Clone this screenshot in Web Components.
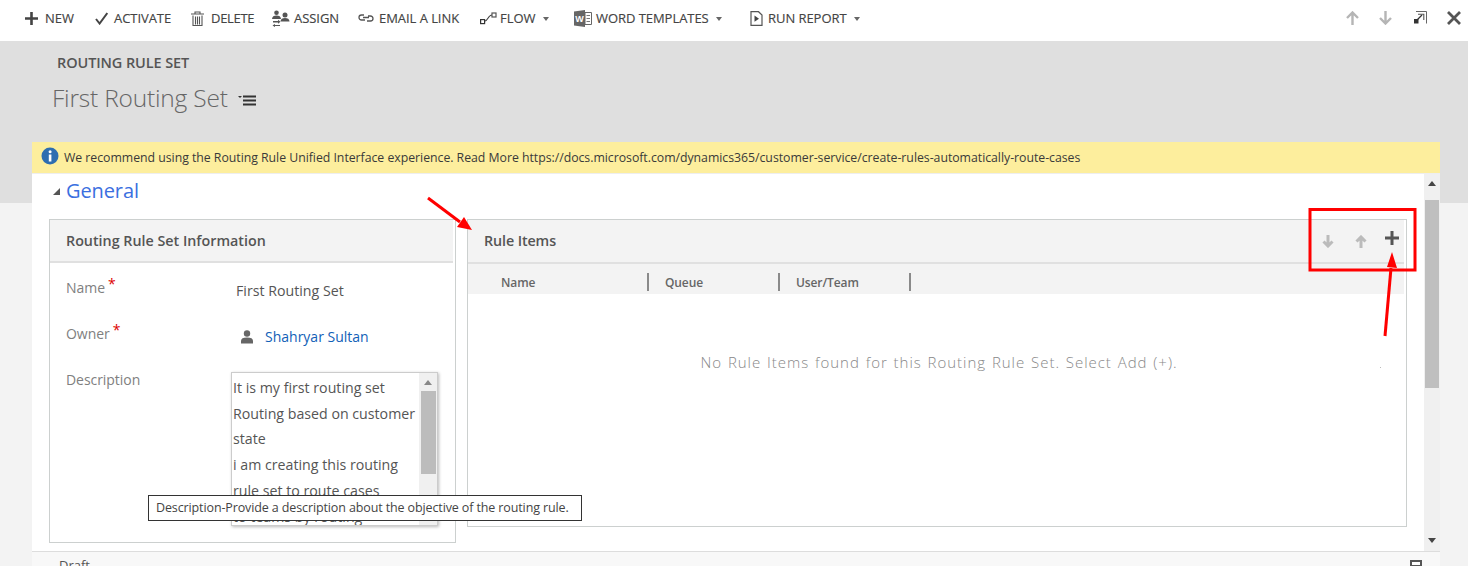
<!DOCTYPE html>
<html><head><meta charset="utf-8">
<style>
html,body{margin:0;padding:0;height:566px;overflow:hidden;background:#f3f3f3;font-family:"Open Sans","Noto Sans",sans-serif}
</style></head><body>
<crm-page>
  <crm-toolbar slot="toolbar">
    <tb-item w="29" gap="7" mr="21" label="NEW"><svg slot="icon" width="13" height="13" viewBox="0 0 13 13"><path d="M5.200 0h2.600v5.200H13v2.600H7.800V13H5.200V7.800H0V5.200h5.200z" fill="#444"/></svg></tb-item>
    <tb-item w="57" gap="6" mr="20" label="ACTIVATE"><svg slot="icon" width="13" height="13" viewBox="0 0 13 13"><path d="M1 7l3.600 4.500L12.300 1" fill="none" stroke="#444" stroke-width="2"/></svg></tb-item>
    <tb-item w="42" gap="7" mr="19" ls="-.3" label="DELETE"><svg slot="icon" width="13" height="15" viewBox="0 0 13 15"><path d="M0 3h13M4 3V1h5v2M2 4.500V14.500h9V4.500M4.500 5.500v8M6.500 5.500v8M8.500 5.500v8" fill="none" stroke="#555" stroke-width="1.100"/></svg></tb-item>
    <tb-item w="45" gap="4" mr="19" label="ASSIGN"><svg slot="icon" width="18" height="17" viewBox="0 0 18 17"><g fill="#555"><circle cx="4.500" cy="2.700" r="2.300"/><path d="M0 9c0-2.500 2-3.500 4.500-3.500S9 6.500 9 9z"/><circle cx="13" cy="5" r="2.500"/><path d="M8.500 11.500c0-2.500 2-3.500 4.500-3.500s4.500 1 4.500 3.500z"/><path d="M1 11h5V9.800l2.500 2-2.500 2V12.500H1zM8 15H3v-1.100L.5 15.500 3 17v-1h5z" /></g></svg></tb-item>
    <tb-item w="81" gap="5" mr="20" label="EMAIL A LINK"><svg slot="icon" width="16" height="8" viewBox="0 0 16 8"><path d="M6 1H3.500a2.500 2.500 0 0 0 0 5H7M10 2h2.500a2.500 2.500 0 0 1 0 5H9M5 3.500h6" fill="none" stroke="#555" stroke-width="1.300"/></svg></tb-item>
    <tb-item w="35" gap="3" mr="8" label="FLOW"><svg slot="icon" width="17" height="13" viewBox="0 0 17 13"><path d="M5 9C8 9 8 3 12 3" fill="none" stroke="#444" stroke-width="1.100"/><rect x=".6" y="7.600" width="4" height="4" fill="none" stroke="#333" stroke-width="1.200"/><rect x="12" y="1" width="4" height="4" fill="none" stroke="#555" stroke-width="1.200"/></svg></tb-item>
    <tb-caret style="--mr:25px"></tb-caret>
    <tb-item w="111" gap="4" mr="9" label="WORD TEMPLATES"><svg slot="icon" width="18" height="17" viewBox="0 0 18 17"><path d="M0 1.500L11 0v17L0 15.500z" fill="#666"/><path d="M11 2.500h6.500v12H11z" fill="#fff" stroke="#666"/><path d="M12.500 5.500h3.500M12.500 8.500h3.500M12.500 11.500h3.500" stroke="#777"/><text x="5.500" y="11.500" font-size="9" font-weight="700" fill="#fff" text-anchor="middle" font-family="Liberation Sans,sans-serif">W</text></svg></tb-item>
    <tb-caret style="--mr:28px"></tb-caret>
    <tb-item w="78" gap="5" mr="8" label="RUN REPORT"><svg slot="icon" width="13" height="15" viewBox="0 0 13 15"><path d="M1 .7h7.500L12 4v10.300H1z" fill="#fff" stroke="#555" stroke-width="1.200"/><path d="M4.500 4.500L9 7.700l-4.500 3z" fill="#444"/></svg></tb-item>
    <tb-caret></tb-caret>
    <tb-nav></tb-nav>
  </crm-toolbar>
  <crm-header slot="header" entity="ROUTING RULE SET" title-text="First Routing Set"></crm-header>
  <crm-form slot="form">
    <crm-notice slot="notice">We recommend using the Routing Rule Unified Interface experience. Read More https://docs.microsoft.com/dynamics365/customer-service/create-rules-automatically-route-cases</crm-notice>
    <crm-section slot="body" heading="General">
      <crm-info-panel slot="left">
        <crm-field label="Name" required top="15" h="46"><span>First Routing Set</span></crm-field>
        <crm-field label="Owner" required h="46"><crm-owner>Shahryar Sultan</crm-owner></crm-field>
        <crm-field label="Description" h="160"><crm-desc></crm-desc></crm-field>
      </crm-info-panel>
      <crm-rules-panel slot="right"></crm-rules-panel>
    </crm-section>
    <crm-scrollbar slot="scroll"></crm-scrollbar>
    <crm-footer slot="footer">Draft</crm-footer>
  </crm-form>
  <crm-tooltip slot="overlay">Description-Provide a description about the objective of the routing rule.</crm-tooltip>
  <crm-annotations slot="overlay"></crm-annotations>
</crm-page>
<script>
function def(name, css, html, extra){
  customElements.define(name, class extends HTMLElement{
    connectedCallback(){
      if(this.shadowRoot) return;
      const r=this.attachShadow({mode:'open'});
      const h=typeof html==='function'?html(this):html;
      r.innerHTML='<style>'+(typeof css==='function'?css(this):css)+'</style>'+h;
      if(extra) extra(this,r);
    }
  });
}
def('crm-page',`:host{display:block;position:relative;width:1468px;height:566px;overflow:hidden;background:linear-gradient(#dfdfdf 203px,#f3f3f3 203px)}`,
 `<slot name="toolbar"></slot><slot name="header"></slot><slot name="form"></slot><slot name="overlay"></slot>`);
def('crm-toolbar',`:host{display:flex;align-items:center;height:41px;background:#fff;color:#444;box-sizing:border-box;padding-left:25px}`,`<slot></slot>`);
def('tb-item',e=>`:host{display:flex;align-items:center;gap:${e.getAttribute('gap')}px;margin-right:${e.getAttribute('mr')}px;font:400 13px/16px "Open Sans",sans-serif;color:#444;flex:none;padding-bottom:5px}
 span{display:block;width:${e.getAttribute('w')}px;white-space:nowrap;letter-spacing:${e.getAttribute('ls')||'-.05'}px;-webkit-text-stroke:.15px #444}
 ::slotted(svg){display:block;flex:none}`,e=>`<slot name="icon"></slot><span>${e.getAttribute('label')}</span>`);
def('tb-caret',`:host{display:block;flex:none;width:0;height:0;border:3.500px solid transparent;border-top:4px solid #666;border-bottom:0;margin-right:var(--mr,0);margin-bottom:4px}`,'');
def('tb-nav',`:host{display:flex;align-items:center;margin-left:auto;padding-right:7px;gap:20.500px;height:100%;padding-bottom:6px;box-sizing:border-box}
 svg{display:block}`,
 `<svg width="13" height="14" viewBox="0 0 13 14"><path d="M6.500 14V2M1 7l5.500-5.500L12 7" fill="none" stroke="#b5b5b5" stroke-width="2.400"/></svg>
  <svg width="13" height="14" viewBox="0 0 13 14"><path d="M6.500 0v12M1 7l5.500 5.500L12 7" fill="none" stroke="#b5b5b5" stroke-width="2.400"/></svg>
  <svg width="14" height="13" viewBox="0 0 14 13"><path d="M3 .5h10.500v12" fill="none" stroke="#666"/><path d="M5 3.200h5.800v5.800" fill="none" stroke="#555" stroke-width="1.100"/><path d="M1 8h4.500v4.500H1z" fill="#333"/><path d="M4 9l5-5" stroke="#333" stroke-width="1.300"/></svg>
  <svg width="14" height="14" viewBox="0 0 14 14"><path d="M1 1l12 12M13 1L1 13" stroke="#555" stroke-width="2.800"/></svg>`);
def('crm-header',`:host{display:block;height:101px;box-sizing:border-box;padding:12px 0 0 52px;color:#555}
 .e{font:600 14.500px/20px "Open Sans",sans-serif;margin-left:5px;color:#555;letter-spacing:-.1px}
 .t{display:flex;align-items:center;margin-top:8px;font:300 24.500px/34px "Open Sans",sans-serif;color:#666;letter-spacing:-.2px}
 svg{margin-left:10px;margin-top:4px}`,
 e=>`<div class="e">${e.getAttribute('entity')}</div><div class="t">${e.getAttribute('title-text')}<svg width="19" height="11" viewBox="0 0 19 11"><path d="M0 1h4L2 3z" fill="#333"/><path d="M5 1.500h13M5 5.500h13M5 9.500h13" stroke="#333" stroke-width="2"/></svg></div>`);
def('crm-form',`:host{display:grid;grid-template-columns:1392px 16px;grid-template-rows:32px 377px 15px;width:1408px;margin-left:32px}
 ::slotted([slot=notice]){grid-column:1/3}
 ::slotted([slot=footer]){grid-column:1/3}`,
 `<slot name="notice"></slot><slot name="body"></slot><slot name="scroll"></slot><slot name="footer"></slot>`);
def('crm-notice',`:host{display:flex;align-items:center;background:#fdee9d;color:#3a3a3a;font:400 12.300px/16px "Open Sans",sans-serif;white-space:nowrap;box-sizing:border-box;padding-left:9px;gap:5px;letter-spacing:-.03px;border-bottom:1px solid #eee}
 svg{flex:none;margin-top:-4px}`,
 `<svg width="18" height="18" viewBox="0 0 18 18"><circle cx="9" cy="9" r="8.500" fill="#2e6db0"/><rect x="7.800" y="7.500" width="2.600" height="7" fill="#fff"/><circle cx="9.100" cy="4.800" r="1.500" fill="#fff"/></svg><slot></slot>`);
def('crm-section',`:host{display:block;background:#fff;height:377px;overflow:hidden}
 .h{display:flex;align-items:center;height:45px;box-sizing:border-box;padding:0 0 12px 21px;font:400 20px/30px "Open Sans",sans-serif;color:#3b6fe0;letter-spacing:-.1px}
 .h i{display:block;width:0;height:0;border-style:solid;border-width:0 0 7px 7px;border-color:transparent transparent #555 transparent;margin-right:6px;margin-top:1px}
 .r{display:flex;align-items:flex-start;padding-left:17px;gap:11px}`,
 e=>`<div class="h"><i></i>${e.getAttribute('heading')}</div><div class="r"><slot name="left"></slot><slot name="right"></slot></div>`);
def('crm-info-panel',`:host{display:block;flex:none;width:407px;height:324px;box-sizing:border-box;border:1px solid #ccd0cf;background:#fff}
 .h{height:43px;box-sizing:border-box;width:403px;background:#f3f3f3;border-bottom:2px solid #e0e0e0;font:600 14.300px/42px "Open Sans",sans-serif;color:#555;padding-left:16px}`,
 `<div class="h">Routing Rule Set Information</div><slot></slot>`);
def('crm-field',e=>`:host{display:grid;grid-template-columns:170px 1fr;padding-left:16px;height:${e.getAttribute('h')}px;margin-top:${e.getAttribute('top')||0}px;font:400 14.200px/20px "Open Sans",sans-serif;color:#555}
 .l{color:#808080;display:flex;align-items:flex-start;gap:3px;font-size:14px;letter-spacing:-.05px}
 .l b{color:#d00;font-weight:400;font-size:14px;line-height:16px;margin-top:-2px}
 .v{padding-top:3px;min-width:0}`,
 e=>`<div class="l">${e.getAttribute('label')}${e.hasAttribute('required')?'<b>*</b>':''}</div><div class="v"><slot></slot></div>`);
def('crm-owner',`:host{display:flex;align-items:center;gap:12px;margin-left:5px;color:#1160b7;font-size:14px}
 svg{display:block}`,`<svg width="12" height="14" viewBox="0 0 12 14"><circle cx="6" cy="3.500" r="3.200" fill="#666"/><path d="M0 13.500V11c0-2.500 2-3.500 6-3.500s6 1 6 3.500v2.500z" fill="#666"/></svg><slot></slot>`);
def('crm-desc',`:host{display:flex;width:207px;height:154px;box-sizing:border-box;margin-top:-1px;margin-left:-5px;border:1px solid #ccc;box-shadow:1px 1px 3px #bbb;background:#fff;overflow:hidden}
 .t{flex:1;padding:2px 0 0 1px;font:400 14.200px/25.700px "Open Sans",sans-serif;color:#555;white-space:nowrap;overflow:hidden}
 .s{flex:none;width:18px;background:#f0f0f0;display:flex;flex-direction:column;align-items:center;padding-top:7px;box-sizing:border-box}
 .s i{display:block;width:0;height:0;border:4px solid transparent;border-bottom:5px solid #888;border-top:0}
 .s b{display:block;width:15px;height:83px;background:#bcbcbc;margin-top:6px}`,
 `<div class="t">It is my first routing set<br>Routing based on customer<br>state<br>i am creating this routing<br>rule set to route cases<br>to teams by routing</div><div class="s"><i></i><b></b></div>`);
def('crm-rules-panel',`:host{display:block;flex:none;width:940px;height:308px;box-sizing:border-box;border:1px solid #ccd0cf;background:#fff;position:relative;font-family:"Open Sans",sans-serif}
 .h{width:936px;height:44px;box-sizing:border-box;background:#f3f3f3;border-bottom:2px solid #e0e0e0;display:flex;align-items:center;padding:0 5px 0 16px;font:600 14.300px/20px "Open Sans",sans-serif;color:#555;letter-spacing:-.1px}
 .h span{margin-right:auto}
 .h svg{display:block;flex:none}
 .c{width:936px;height:30px;box-sizing:border-box;background:#f3f3f3;display:flex;align-items:center;font:600 12px/16px "Open Sans",sans-serif;color:#666;padding:6px 0 0 33px}
 .c div{box-sizing:border-box;height:18px;border-right:2px solid #8a8a8a;line-height:20px;letter-spacing:-.1px}
 .e{display:flex;justify-content:center;padding:57px 0 0 4px;font:300 15px/22px "Open Sans",sans-serif;color:#888;letter-spacing:.97px;white-space:nowrap;word-spacing:1px}`,
 `<div class="h"><span>Rule Items</span>
   <svg width="12" height="13" viewBox="0 0 12 13" style="margin-right:21px"><path d="M6 0v11M1.500 6.500L6 11l4.500-4.500" fill="none" stroke="#bbb" stroke-width="3"/></svg>
   <svg width="12" height="13" viewBox="0 0 12 13" style="margin-right:18px"><path d="M6 13V2M1.500 6.500L6 2l4.500 4.500" fill="none" stroke="#bbb" stroke-width="3"/></svg>
   <svg width="14" height="14" viewBox="0 0 14 14" style="margin-top:-6px"><path d="M5.500 0h3v5.500H14v3H8.500V14h-3V8.500H0v-3h5.500z" fill="#555"/></svg>
  </div>
  <div class="c"><div style="width:148px">Name</div><div style="width:131px;padding-left:16px">Queue</div><div style="width:131px;padding-left:16px">User/Team</div></div>
  <div class="e">No Rule Items found for this Routing Rule Set. Select Add (+).</div>`);
def('crm-scrollbar',`:host{display:flex;flex-direction:column;align-items:center;background:#f0f0f0;height:377px;box-sizing:border-box;padding-top:7px}
 i{display:block;width:0;height:0;border:4.500px solid transparent}
 .u{border-bottom:5px solid #444;border-top:0}
 .d{border-top:5px solid #444;border-bottom:0;margin-top:150px}
 b{display:block;width:14px;height:188px;background:#bfbfbf;margin-top:14px}`,`<i class="u"></i><b></b><i class="d"></i>`);
def('crm-footer',`:host{display:flex;height:15px;background:#f8f8f8;border-top:1px solid #ddd;box-sizing:border-box;padding:3px 0 0 27px;font:400 13px/20px "Open Sans",sans-serif;color:#555;overflow:hidden;justify-content:space-between}
 svg{display:block;margin:5px 18px 0 0}`,`<slot></slot><svg width="12" height="12" viewBox="0 0 12 12"><path d="M0 0h12v12H0z" fill="#555"/><path d="M2 2h8v3H2z" fill="#fff"/></svg>`);
def('crm-tooltip',`:host{position:absolute;left:148px;top:495px;box-sizing:border-box;width:434px;height:26px;background:#fff;border:1px solid #333;padding-left:7px;font:400 12.500px/24px "Open Sans",sans-serif;color:#444;white-space:nowrap;letter-spacing:-.12px}`,`<slot></slot>`);
def('crm-annotations',`:host{position:absolute;left:0;top:0;width:1468px;height:566px;pointer-events:none}
 svg{display:block}`,
 `<svg width="1468" height="566" viewBox="0 0 1468 566">
  <rect x="1310" y="209.500" width="105" height="60.500" fill="none" stroke="#f00" stroke-width="3"/>
  <path d="M428 198L460 222" stroke="#f00" stroke-width="3" fill="none"/>
  <path d="M472 230L457 227L464 217z" fill="#f00"/>
  <path d="M1385 336L1391 268" stroke="#f00" stroke-width="3" fill="none"/>
  <path d="M1392 252L1397 268L1387 267z" fill="#f00"/>
  <rect x="1380" y="367" width="1" height="1" fill="#bbb"/>
 </svg>`);
</script>
</body></html>
